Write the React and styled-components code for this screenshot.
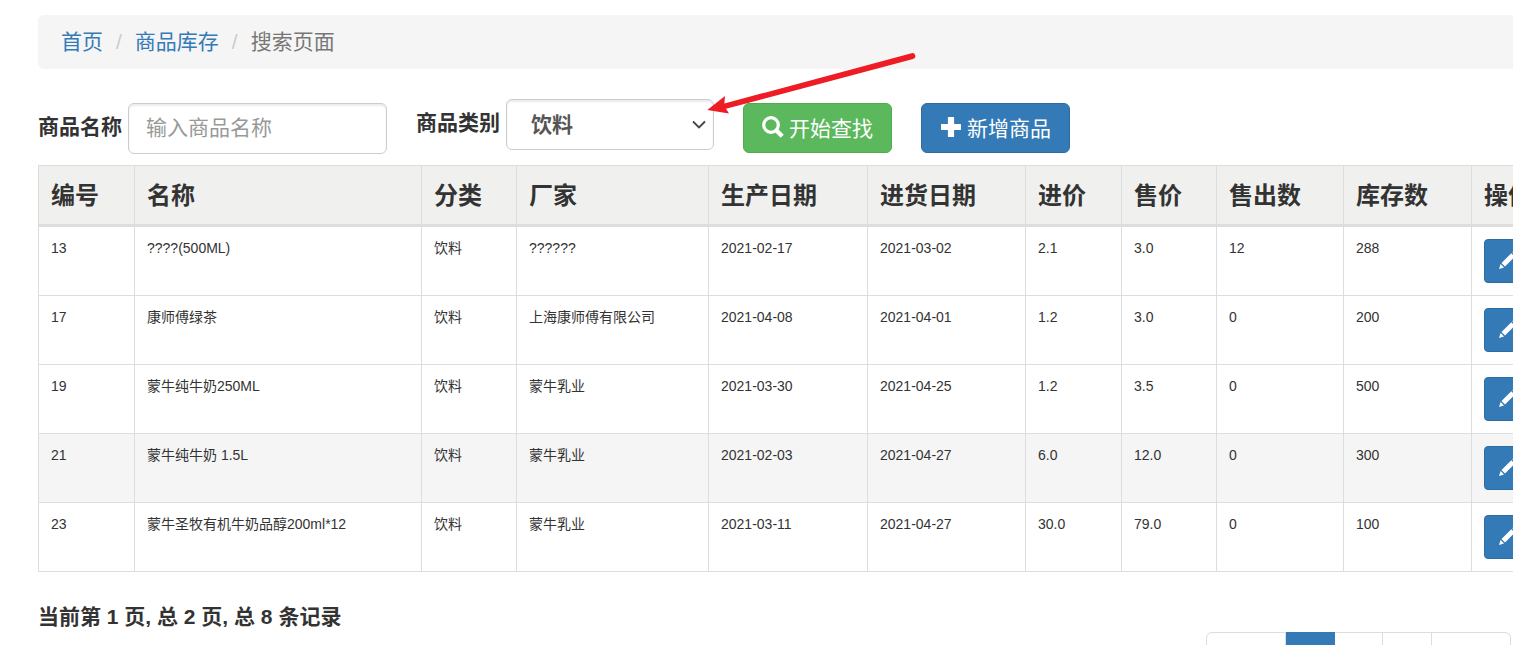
import { useState } from 'react';
import styled, { createGlobalStyle, css } from 'styled-components';

const GlobalStyle = createGlobalStyle`
    * {
        box-sizing: border-box;
    }
    html {
        scrollbar-width: none;
    }
    body {
        margin: 0;
        background-color: #fff;
        color: #333;
        font-family: "Liberation Sans", "Noto Sans CJK SC", sans-serif;
        font-size: 21px;
        line-height: 30px;
    }
`

const Page = styled.div`
    position: relative;
    padding: 15px 0 30px 38px;
    overflow: hidden;
`
const Breadcrumb = styled.ol`
    display: flex;
    list-style: none;
    margin: 0 0 30px;
    padding: 12px 23px;
    background-color: #f5f5f5;
    border-radius: 6px 0 0 6px;
`
const Crumb = styled.li`
    color: #777;

    & + &::before {
        content: "/";
        margin: 0 13px;
        color: #ccc;
    }
`
const CrumbLink = styled.a`
    color: #337ab7;
    text-decoration: none;
    &:hover {
        text-decoration: underline;
    }
`

const Toolbar = styled.form`
    display: flex;
    align-items: flex-start;
    gap: 29px;
    margin-bottom: 11px;
`
const Field = styled.div`
    display: flex;
    align-items: center;
    gap: 6px;
    margin-top: ${props => (props.$raised ? 0 : 4)}px;
`
const Label = styled.label`
    font-weight: bold;
    white-space: nowrap;
    padding-bottom: 4px;
`
const control = css`
    height: 51px;
    border: 1px solid #ccc;
    border-radius: 6px;
    background-color: #fff;
    box-shadow: inset 0 2px 2px rgba(0, 0, 0, 0.08);
    font-family: inherit;
    font-size: 21px;
    color: #555;
`
const TextInput = styled.input`
    ${control}
    width: 259px;
    padding: 6px 17px 8px;
    &::placeholder {
        color: #999;
    }
`
const SelectBox = styled.div`
    display: grid;
    align-items: center;
    > * {
        grid-area: 1 / 1;
    }
`
const Select = styled.select`
    ${control}
    appearance: none;
    width: 208px;
    padding: 8px 24px;
    font-weight: bold;
`
const Chevron = styled.svg`
    justify-self: end;
    margin-right: 8px;
    pointer-events: none;
`
const Button = styled.button`
    display: flex;
    align-items: center;
    justify-content: center;
    gap: 5px;
    margin-top: 4px;
    width: 149px;
    height: 50px;
    padding: 0 0 3px;
    border: 1px solid ${props => (props.$primary ? '#2e6da4' : '#4cae4c')};
    border-radius: 6px;
    background-color: ${props => (props.$primary ? '#337ab7' : '#5cb85c')};
    color: #fff;
    font-family: inherit;
    font-size: 21px;
    white-space: nowrap;
    cursor: pointer;
`

const TableScroller = styled.div`
    overflow: hidden;
`
const Table = styled.table`
    width: 1720px;
    table-layout: fixed;
    border-collapse: collapse;
    font-size: 14px;
    line-height: 18px;
`
const Col = styled.col`
    width: ${props => props.$width}px;
`
const Th = styled.th`
    padding: 13px 12px 11px;
    border: 1px solid #ddd;
    border-bottom-width: 3px;
    background-color: #f0f0ee;
    font-size: 24px;
    line-height: 34px;
    text-align: left;
`
const Tr = styled.tr`
    background-color: ${props => (props.$active ? '#f5f5f5' : '#fff')};
`
const Td = styled.td`
    padding: 12px;
    border: 1px solid #ddd;
    vertical-align: top;
`
const EditButton = styled.button`
    display: flex;
    align-items: center;
    height: 44px;
    padding: 0 14px;
    border: 1px solid #2e6da4;
    border-radius: 4px;
    background-color: #337ab7;
    color: #fff;
    cursor: pointer;
`

const Summary = styled.p`
    margin: 30px 0 0;
    font-weight: bold;
`
const Pager = styled.ul`
    display: flex;
    justify-content: flex-end;
    list-style: none;
    margin: 0;
    padding: 0 2px 0 0;
`
const PagerItem = styled.li`
    &:first-child a {
        border-left: 1px solid #ddd;
        border-radius: 6px 0 0 6px;
    }
    &:last-child a {
        border-radius: 0 6px 6px 0;
    }
`
const PagerLink = styled.a`
    display: block;
    padding: 9px 18px;
    border: 1px solid #ddd;
    border-left: 0;
    color: #337ab7;
    text-decoration: none;
    ${props => props.$active && css`
        background-color: #337ab7;
        border-color: #337ab7;
        color: #fff;
    `}
`

const Arrow = styled.svg`
    position: absolute;
    left: 700px;
    top: 48px;
    pointer-events: none;
`

const SearchIcon = () => (
    <svg width="22" height="22" viewBox="0 0 22 22" fill="none" stroke="currentColor" aria-hidden="true">
        <circle cx="9" cy="9" r="7.3" strokeWidth="3.2" />
        <path d="M14.2 14.2L20.2 20.2" strokeWidth="4.4" />
    </svg>
)

const PlusIcon = () => (
    <svg width="22" height="22" viewBox="0 0 22 22" fill="currentColor" aria-hidden="true">
        <path d="M8.5 1h5q.6 0 .6.6v6.4h6.3q.6 0 .6.6v4.8q0 .6-.6.6h-6.3v6.4q0 .6-.6.6h-5q-.6 0-.6-.6V14H1.6q-.6 0-.6-.6V8.600q0-.6.6-.6h6.300V1.600q0-.6.6-.6z" />
    </svg>
)

const PencilIcon = () => (
    <svg width="20" height="20" viewBox="0 0 20 20" fill="currentColor" aria-hidden="true">
        <path d="M0 18l1.600-5 3.400 3.400zM2.500 12L12.300 2.200l3.500 3.500L6 15.500zM13.300 1.300l.8-.8q.6-.6 1.200 0l2.300 2.300q.6.6 0 1.200l-.8.8z" />
    </svg>
)

const columns = [
    ['编号', 96],
    ['名称', 287],
    ['分类', 95],
    ['厂家', 192],
    ['生产日期', 159],
    ['进货日期', 158],
    ['进价', 96],
    ['售价', 95],
    ['售出数', 127],
    ['库存数', 128],
    ['操作', 287],
]

const rows = [
    ['13', '????(500ML)', '饮料', '??????', '2021-02-17', '2021-03-02', '2.1', '3.0', '12', '288'],
    ['17', '康师傅绿茶', '饮料', '上海康师傅有限公司', '2021-04-08', '2021-04-01', '1.2', '3.0', '0', '200'],
    ['19', '蒙牛纯牛奶250ML', '饮料', '蒙牛乳业', '2021-03-30', '2021-04-25', '1.2', '3.5', '0', '500'],
    ['21', '蒙牛纯牛奶 1.5L', '饮料', '蒙牛乳业', '2021-02-03', '2021-04-27', '6.0', '12.0', '0', '300'],
    ['23', '蒙牛圣牧有机牛奶品醇200ml*12', '饮料', '蒙牛乳业', '2021-03-11', '2021-04-27', '30.0', '79.0', '0', '100'],
]

const pages = ['上页', '1', '2', '3', '下页']

export default function App() {
    const [name, setName] = useState('');

    return (
        <Page>
            <GlobalStyle />
            <Breadcrumb>
                <Crumb><CrumbLink href="#home">首页</CrumbLink></Crumb>
                <Crumb><CrumbLink href="#stock">商品库存</CrumbLink></Crumb>
                <Crumb>搜索页面</Crumb>
            </Breadcrumb>
            <Toolbar onSubmit={(e) => e.preventDefault()}>
                <Field>
                    <Label htmlFor="name">商品名称</Label>
                    <TextInput
                        id="name"
                        placeholder="输入商品名称"
                        value={name}
                        onChange={(e) => setName(e.target.value)}
                    />
                </Field>
                <Field $raised>
                    <Label htmlFor="category">商品类别</Label>
                    <SelectBox>
                        <Select id="category">
                            <option>饮料</option>
                        </Select>
                        <Chevron width="14" height="9" viewBox="0 0 14 9" fill="none" stroke="#444" strokeWidth="1.8">
                            <path d="M1 1.500l6 6 6-6" />
                        </Chevron>
                    </SelectBox>
                </Field>
                <Button type="submit"><SearchIcon />开始查找</Button>
                <Button type="button" $primary><PlusIcon />新增商品</Button>
            </Toolbar>
            <TableScroller>
                <Table>
                    <colgroup>
                        {columns.map(([title, width]) => <Col key={title} $width={width} />)}
                    </colgroup>
                    <thead>
                        <tr>
                            {columns.map(([title]) => <Th key={title}>{title}</Th>)}
                        </tr>
                    </thead>
                    <tbody>
                        {rows.map((row) => (
                            <Tr key={row[0]} $active={row[0] === '21'}>
                                {row.map((cell, i) => <Td key={i}>{cell}</Td>)}
                                <Td>
                                    <EditButton type="button" aria-label="编辑"><PencilIcon /></EditButton>
                                </Td>
                            </Tr>
                        ))}
                    </tbody>
                </Table>
            </TableScroller>
            <Summary>当前第 1 页, 总 2 页, 总 8 条记录</Summary>
            <Pager>
                {pages.map((page) => (
                    <PagerItem key={page}>
                        <PagerLink href="#page" $active={page === '1'}>{page}</PagerLink>
                    </PagerItem>
                ))}
            </Pager>
            <Arrow width="220" height="70" viewBox="0 0 220 70" fill="#ee1c24" aria-hidden="true">
                <path d="M7.300 62L25 48l-.6 7.500L211.500 5.200a3 3 0 0 1 1.600 5.800L26 60.800l3 4.700z" />
            </Arrow>
        </Page>
    )
}
